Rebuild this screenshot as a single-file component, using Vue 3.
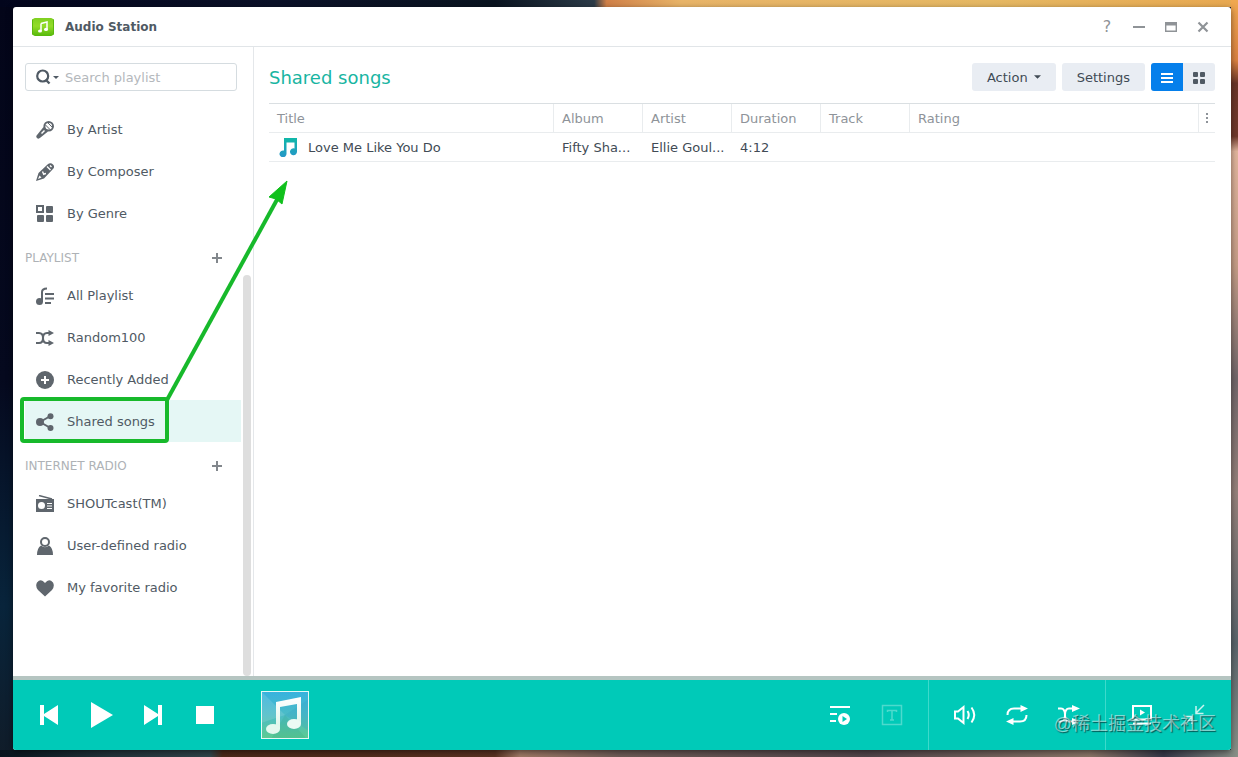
<template>
  <div class="desktop">
    <div class="window">
      <header class="titlebar">
        <svg class="app-icon" viewBox="0 0 22 20">
          <defs>
            <linearGradient id="app-green" x1="0" y1="0" x2="0" y2="1">
              <stop offset="0" stop-color="#7fd021" />
              <stop offset="0.45" stop-color="#93dc28" />
              <stop offset="1" stop-color="#55b80a" />
            </linearGradient>
          </defs>
          <rect x="0" y="2" width="22" height="16" rx="1" fill="#5cb70e" />
          <rect x="1" y="1" width="20" height="18" rx="2" fill="url(#app-green)" />
          <path d="M9 6.5L15 5V12M9 6.500V14" fill="none" stroke="#fff" stroke-width="1.5" />
          <ellipse cx="8" cy="14" rx="2" ry="1.6" fill="#fff" />
          <ellipse cx="14" cy="12.4" rx="2" ry="1.6" fill="#fff" />
        </svg>
        <h1>Audio Station</h1>
        <div class="window-buttons">
          <button aria-label="Help">?</button>
          <button aria-label="Minimize">
            <svg viewBox="0 0 12 12"><path d="M0 6H12" stroke="currentColor" stroke-width="2" /></svg>
          </button>
          <button aria-label="Maximize">
            <svg viewBox="0 0 12 12">
              <path d="M0.700 1.700H11.300V10.300H0.700Z" fill="none" stroke="currentColor" stroke-width="1.4" />
              <path d="M0 1H12V4.500H0Z" fill="currentColor" />
            </svg>
          </button>
          <button aria-label="Close">
            <svg viewBox="0 0 12 12"><path d="M1.500 1.500L10.500 10.500M10.500 1.500L1.500 10.500" stroke="currentColor" stroke-width="2.2" /></svg>
          </button>
        </div>
      </header>

      <div class="body">
        <aside class="sidebar">
          <label class="search">
            <svg viewBox="0 0 24 16">
              <circle cx="6.700" cy="7" r="5.500" fill="none" stroke="#505a64" stroke-width="2.2" />
              <path d="M10 11L13.500 14.500" stroke="#505a64" stroke-width="2.4" />
              <path d="M17 7H23L20 10Z" fill="#505a64" />
            </svg>
            <input v-model="query" type="text" placeholder="Search playlist" aria-label="Search playlist" />
          </label>

          <nav class="nav">
            <section v-for="group in groups" :key="group.id" class="group">
              <div v-if="group.title" class="group-title">
                <h2>{{ group.title }}</h2>
                <button :aria-label="'Add to ' + group.title">
                  <svg viewBox="0 0 10 10"><path d="M0 5H10M5 0V10" stroke="currentColor" stroke-width="2" /></svg>
                </button>
              </div>
              <a
                v-for="item in group.items"
                :key="item.label"
                href="#"
                class="nav-item"
                :class="{ active: item.label === selected, marked: item.label === 'Shared songs' }"
                @click.prevent="selected = item.label"
              >
                <svg class="nav-icon" viewBox="0 0 18 18" v-html="item.icon"></svg>
                <span>{{ item.label }}</span>
              </a>
            </section>
          </nav>
          <div class="scroll-thumb"></div>
        </aside>

        <main class="content">
          <div class="toolbar">
            <h2>{{ selected }}</h2>
            <button class="btn">
              Action
              <svg viewBox="0 0 6 3"><path d="M0 0H6L3 3Z" fill="currentColor" /></svg>
            </button>
            <button class="btn">Settings</button>
            <div class="view-switch">
              <button :class="{ on: view === 'list' }" aria-label="List view" @click="view = 'list'">
                <svg viewBox="0 0 12 12"><path d="M0 2H12M0 6H12M0 10H12" stroke="currentColor" stroke-width="2" /></svg>
              </button>
              <button :class="{ on: view === 'grid' }" aria-label="Grid view" @click="view = 'grid'">
                <svg viewBox="0 0 12 12" fill="currentColor">
                  <rect width="5" height="5" rx="1" />
                  <rect x="7" width="5" height="5" rx="1" />
                  <rect y="7" width="5" height="5" rx="1" />
                  <rect x="7" y="7" width="5" height="5" rx="1" />
                </svg>
              </button>
            </div>
          </div>

          <table class="songs">
            <thead>
              <tr>
                <th class="col-title">Title</th>
                <th>Album</th>
                <th>Artist</th>
                <th>Duration</th>
                <th>Track</th>
                <th class="col-rating">Rating</th>
                <th class="col-menu">
                  <button aria-label="Columns">
                    <svg viewBox="0 0 2 10" fill="currentColor">
                      <rect width="2" height="2" />
                      <rect y="4" width="2" height="2" />
                      <rect y="8" width="2" height="2" />
                    </svg>
                  </button>
                </th>
              </tr>
            </thead>
            <tbody>
              <tr v-for="song in songs" :key="song.title">
                <td>
                  <div class="song-title">
                    <svg viewBox="0 0 18 19">
                      <defs>
                        <linearGradient id="note" x1="0" y1="0" x2="0" y2="1">
                          <stop offset="0" stop-color="#10b8a8" />
                          <stop offset="1" stop-color="#2596c8" />
                        </linearGradient>
                      </defs>
                      <path d="M5 0H18V14A3.500 3.400 0 1 1 15.500 10.500V4.500H7.500V16A3.500 3.400 0 1 1 5 12.600Z" fill="url(#note)" />
                    </svg>
                    {{ song.title }}
                  </div>
                </td>
                <td>{{ song.album }}</td>
                <td>{{ song.artist }}</td>
                <td>{{ song.duration }}</td>
                <td></td>
                <td colspan="2"></td>
              </tr>
            </tbody>
          </table>
        </main>
      </div>

      <footer class="player">
        <div class="controls">
          <button aria-label="Previous">
            <svg viewBox="0 0 24 24" fill="currentColor"><path d="M3 2H7V11L21 2V22L7 13V22H3Z" /></svg>
          </button>
          <button aria-label="Play">
            <svg viewBox="0 0 24 26" class="play" fill="currentColor"><path d="M2 0L24 13L2 26Z" /></svg>
          </button>
          <button aria-label="Next">
            <svg viewBox="0 0 24 24" fill="currentColor"><path d="M3 2L17 11V2H21V22H17V13L3 22Z" /></svg>
          </button>
          <button aria-label="Stop">
            <svg viewBox="0 0 24 24" fill="currentColor"><rect x="3" y="3" width="18" height="18" /></svg>
          </button>
        </div>
        <svg class="cover" viewBox="0 0 48 48">
          <defs>
            <linearGradient id="cover-bg" x1="0" y1="0" x2="0" y2="1">
              <stop offset="0" stop-color="#36b2df" />
              <stop offset="0.5" stop-color="#4cbcc6" />
              <stop offset="1" stop-color="#5dcb90" />
            </linearGradient>
            <linearGradient id="cover-note" x1="0" y1="0" x2="0" y2="1">
              <stop offset="0" stop-color="#fff" />
              <stop offset="1" stop-color="#dcf6ea" />
            </linearGradient>
          </defs>
          <rect width="48" height="48" fill="url(#cover-bg)" />
          <path d="M0 0L24 24L0 32Z" fill="#fff" opacity="0.12" />
          <path d="M48 8L24 24L48 40Z" fill="#1f8fc0" opacity="0.15" />
          <path d="M10 48L24 24L46 48Z" fill="#2fa080" opacity="0.2" />
          <path d="M15 11L40 6V33H36V13L19 16V38H15Z" fill="url(#cover-note)" />
          <ellipse cx="12" cy="38" rx="7" ry="5" fill="#e4f8ef" />
          <ellipse cx="33" cy="33" rx="7" ry="5" fill="#ecfaf5" />
          <rect x="0.5" y="0.5" width="47" height="47" fill="none" stroke="#e4f8f6" />
        </svg>
        <div class="tools grow">
          <button aria-label="Play queue">
            <svg viewBox="0 0 24 24" fill="none" stroke="currentColor" stroke-width="2">
              <path d="M2 4H22M2 11H9M2 18H8" />
              <circle cx="16" cy="16" r="6" fill="currentColor" stroke="none" />
              <path d="M14.500 13L19 16L14.500 19Z" fill="#00cab8" stroke="none" />
            </svg>
          </button>
          <button aria-label="Lyrics" class="dim">
            <svg viewBox="0 0 24 24" fill="none" stroke="currentColor" stroke-width="1.5">
              <path d="M2.500 2.500H21.500V21.500H2.500Z" />
              <path d="M7.500 9V7.500H16.500V9M12 7.500V17M10 17H14" />
            </svg>
          </button>
        </div>
        <div class="tools">
          <button aria-label="Volume">
            <svg viewBox="0 0 24 24" fill="none" stroke="currentColor" stroke-width="2">
              <path d="M2 8.500H5L10.500 4V20L5 15.500H2Z" />
              <path d="M14.500 8Q17 12 14.500 16M18.500 4.500Q24 12 18.500 19.500" />
            </svg>
          </button>
          <button aria-label="Repeat">
            <svg viewBox="0 0 24 24" fill="none" stroke="currentColor" stroke-width="2">
              <path d="M2.500 12Q2.500 5.500 9 5.500H17M21.500 12Q21.500 18.500 15 18.500H7" />
              <path d="M15.500 2L23 5.500L15.500 9ZM8.500 15L1 18.500L8.500 22Z" fill="currentColor" stroke="none" />
            </svg>
          </button>
          <button aria-label="Shuffle">
            <svg viewBox="0 0 24 24" fill="none" stroke="currentColor" stroke-width="2">
              <path d="M1 5.500H4Q8 5.500 8 12T12 18.500H17M1 18.500H4Q8 18.500 8 12T12 5.500H17" />
              <path d="M15 2L23 5.500L15 9ZM15 15L23 18.500L15 22Z" fill="currentColor" stroke="none" />
            </svg>
          </button>
        </div>
        <div class="tools last">
          <button aria-label="Player">
            <svg viewBox="0 0 24 24" fill="none" stroke="currentColor" stroke-width="2">
              <path d="M3 3H21V16.500H3ZM3 20.500H21" />
              <path d="M10 6.500L15 9.500L10 12.500Z" fill="currentColor" stroke="none" />
            </svg>
          </button>
          <button aria-label="Mini player">
            <svg viewBox="0 0 24 24" fill="none" stroke="currentColor" stroke-width="1.5" opacity="0.8">
              <path d="M22 2L14 10M14 3V10.500H21.500M2 22L10 14M3 13.500H10V21" />
            </svg>
          </button>
        </div>
      </footer>
    </div>

    <!-- Arrow from the marked entry to the song list -->
    <svg class="arrow" width="130" height="224" viewBox="0 0 130 224">
      <path d="M4 221L116 17" stroke="#17b92b" stroke-width="4" fill="none" />
      <path d="M124 2L119 25L113 20L106 18Z" fill="#10c01c" stroke="#10c01c" />
    </svg>
    <div class="watermark">@稀土掘金技术社区</div>
  </div>
</template>

<script setup>
import { ref } from 'vue'

const query = ref('')
const selected = ref('Shared songs')
const view = ref('list')

const groups = [
  {
    id: 'browse',
    items: [
      {
        label: 'By Artist',
        icon: '<path d="M7.500 6L12 10.500L4.500 16.500Q2.500 18.500 1 17T1 14Z"/><path d="M5.500 12.500L8.500 9.500" stroke="#fff" stroke-width="1.500"/><circle cx="12.700" cy="5.300" r="4.300" fill="#fff" stroke="currentColor" stroke-width="2"/><path d="M9.500 4L14 8.500M12 2L16 6" stroke="currentColor"/>'
      },
      {
        label: 'By Composer',
        icon: '<path d="M11.500 1.500Q14.500-1 17 1.500T16.500 6.500L8 15.500L0 18L2.500 10Z"/><path d="M2 16L3.500 12.500L5.500 14.500Z" fill="#fff"/><path d="M6.500 8.500L8 12M8 11L10 10.500M11 3.500L14.500 7M14 2.500L15.500 4" stroke="#fff" stroke-width="1.400"/>'
      },
      {
        label: 'By Genre',
        icon: '<path d="M1 1H7V7H1Z" fill="none" stroke="currentColor" stroke-width="2"/><rect x="10" y="1" width="7" height="7" rx="1"/><rect x="1" y="10" width="7" height="7" rx="1"/><rect x="10" y="10" width="7" height="7" rx="1"/>'
      }
    ]
  },
  {
    id: 'playlist',
    title: 'PLAYLIST',
    items: [
      {
        label: 'All Playlist',
        icon: '<circle cx="3.500" cy="14.500" r="3.500"/><path d="M6 15V5Q6 1.500 11 1.500M9 7H18M9 11.500H18M9 16H15" fill="none" stroke="currentColor" stroke-width="2"/>'
      },
      {
        label: 'Random100',
        icon: '<path d="M0 4H3Q7 4 7 9T11 14H14M0 14H3Q7 14 7 9T11 4H14" fill="none" stroke="currentColor" stroke-width="2"/><path d="M12.500 1L18 4L12.500 7ZM12.500 11L18 14L12.500 17Z"/>'
      },
      {
        label: 'Recently Added',
        icon: '<circle cx="9" cy="9" r="9"/><path d="M5 9H13M9 5V13" stroke="#fff" stroke-width="2"/>'
      },
      {
        label: 'Shared songs',
        icon: '<circle cx="4" cy="9" r="4"/><circle cx="14.500" cy="3.300" r="3"/><circle cx="14.500" cy="15" r="3"/><path d="M14.500 3L4 9L14.500 15" fill="none" stroke="currentColor" stroke-width="2"/>'
      }
    ]
  },
  {
    id: 'radio',
    title: 'INTERNET RADIO',
    items: [
      {
        label: 'SHOUTcast(TM)',
        icon: '<path d="M0 4H18V17H0Z"/><path d="M3 0.500L16 4" stroke="currentColor" stroke-width="1.500"/><circle cx="5.500" cy="10.500" r="3.500" fill="#fff"/><path d="M11 8.500H16M11 11H16M11 13.500H16" stroke="#fff"/>'
      },
      {
        label: 'User-defined radio',
        icon: '<circle cx="9" cy="5" r="4" fill="none" stroke="currentColor" stroke-width="2"/><path d="M5 8.500Q9 12 13 8.500Q17 11 17 18H1Q1 11 5 8.500Z"/>'
      },
      {
        label: 'My favorite radio',
        icon: '<path d="M9 17.500L2 11Q-1 7.500 1 3.500Q5-1 9 4Q13-1 17 3.500Q19 7.500 16 11Z"/>'
      }
    ]
  }
]

const songs = [
  { title: 'Love Me Like You Do', album: 'Fifty Sha...', artist: 'Ellie Goul...', duration: '4:12' }
]
</script>

<style>
body {
  margin: 0;
}
</style>

<style scoped>
.desktop {
  position: relative;
  box-sizing: border-box;
  height: 100vh;
  padding: 7px 7px 7px 13px;
  background:
    linear-gradient(90deg, #07141d 0%, #22343b 9%, #30454a 17%, #4b2818 18%, #5a3222 40%, #a07a66 42%, #6e5c57 50%, #51454a 70%, #8b7668 88%, #363848 94%, #889087 100%) bottom / 100% 7px no-repeat,
    linear-gradient(180deg, #f0a850 0%, #d98040 8%, #6a3528 11%, #70382b 18%, #e0b49c 20%, #c49c86 35%, #71666a 50%, #94807a 65%, #59646b 85%, #889087 100%) right / 7px 100% no-repeat,
    linear-gradient(90deg, #02051c 0%, #0b1128 22%, #0a1420 40%, #2c3b48 48%, #d08048 49%, #e8b468 55%, #e5b863 80%, #e8a850 100%) top / 100% 7px no-repeat,
    linear-gradient(180deg, #030519 0%, #05091e 50%, #08243b 80%, #101c29 100%);
  font-family: Verdana, 'DejaVu Sans', sans-serif;
  font-size: 13px;
  color: #505a64;
}

.window {
  display: flex;
  flex-direction: column;
  height: 100%;
  border-radius: 3px;
  overflow: hidden;
  background: #fff;
  box-shadow: 0 2px 6px rgba(0, 0, 0, 0.5);
}

button {
  display: flex;
  align-items: center;
  justify-content: center;
  padding: 0;
  border: none;
  background: none;
  color: inherit;
  font: inherit;
  cursor: pointer;
}

h1,
h2 {
  margin: 0;
}

.titlebar {
  display: flex;
  align-items: center;
  height: 39px;
  flex: none;
  padding: 0 12px 0 19px;
  border-bottom: 1px solid #e1e5e8;
}

.app-icon {
  width: 22px;
  height: 20px;
  margin-right: 11px;
}

.titlebar h1 {
  flex: 1;
  font-size: 12px;
  line-height: 20px;
}

.window-buttons {
  display: flex;
  color: #8f9397;
  font-size: 16px;
}

.window-buttons button {
  width: 32px;
  height: 32px;
}

.window-buttons svg {
  width: 12px;
  height: 12px;
}

.body {
  display: flex;
  flex: 1;
  min-height: 0;
}

.sidebar {
  position: relative;
  box-sizing: border-box;
  flex: none;
  width: 241px;
  padding: 16px 12px 0;
  border-right: 1px solid #e4e7ea;
}

.search {
  display: flex;
  align-items: center;
  box-sizing: border-box;
  width: 212px;
  height: 28px;
  padding: 0 10px;
  gap: 5px;
  border: 1px solid #d5dce0;
  border-radius: 3px;
}

.search svg {
  flex: none;
  width: 24px;
  height: 16px;
}

.search input {
  flex: 1;
  min-width: 0;
  padding: 0;
  border: none;
  outline: none;
  font: inherit;
  color: inherit;
}

.search input::placeholder {
  color: #b4b8bc;
}

.nav {
  padding-top: 17px;
}

.group-title {
  display: flex;
  align-items: center;
  justify-content: space-between;
  height: 32px;
  padding: 8px 18px 0 0;
  color: #aeb2b6;
}

.group-title h2 {
  font-size: 12px;
  font-weight: normal;
}

.group-title button {
  width: 12px;
  height: 20px;
  color: #82878c;
}

.group-title svg {
  width: 10px;
  height: 10px;
}

.nav-item {
  display: flex;
  align-items: center;
  gap: 13px;
  height: 42px;
  padding-left: 11px;
  color: #505a64;
  text-decoration: none;
  white-space: nowrap;
}

.nav-icon {
  flex: none;
  width: 18px;
  height: 18px;
  margin-top: 2px;
  color: #5f666d;
  fill: currentColor;
}

.nav-item.active {
  position: relative;
  background: #e5f7f5;
}

.nav-item.marked::before {
  content: '';
  position: absolute;
  top: -3px;
  left: -5px;
  width: 141px;
  height: 38px;
  border: 4px solid #17b92b;
  border-radius: 4px;
}

.scroll-thumb {
  position: absolute;
  top: 228px;
  right: 2px;
  bottom: 0;
  width: 8px;
  border-radius: 4px;
  background: #dedede;
}

.content {
  flex: 1;
  min-width: 0;
  padding: 16px 16px 0 15px;
}

.toolbar {
  display: flex;
  align-items: center;
  gap: 6px;
  margin-bottom: 12px;
}

.toolbar h2 {
  flex: 1;
  color: #18b5a2;
  font-size: 18px;
  font-weight: normal;
}

.btn {
  height: 28px;
  padding: 0 15px;
  gap: 6px;
  border-radius: 3px;
  background: #e9edf3;
  color: #414b55;
}

.btn svg {
  width: 7px;
  height: 4px;
}

.view-switch {
  display: flex;
  border-radius: 3px;
  overflow: hidden;
  background: #e9edf3;
}

.view-switch button {
  width: 32px;
  height: 28px;
}

.view-switch .on {
  background: #057feb;
  color: #fff;
}

.view-switch svg {
  width: 12px;
  height: 12px;
  margin-top: 2px;
}

.songs {
  width: 100%;
  table-layout: fixed;
  border-collapse: separate;
  border-spacing: 0;
  border-top: 1px solid #dadfe2;
}

.songs th,
.songs td {
  box-sizing: border-box;
  height: 29px;
  padding: 0 4px 0 8px;
  border-bottom: 1px solid #e9ecee;
  text-align: left;
  white-space: nowrap;
}

.songs th {
  width: 89px;
  border-right: 1px solid #e9ecee;
  color: #8e9399;
  font-weight: normal;
}

.songs .col-title {
  width: 285px;
}

.songs .col-rating {
  width: auto;
}

.songs .col-menu {
  width: 16px;
  padding: 0;
  border-right: none;
}

.col-menu button {
  width: 16px;
  height: 20px;
}

.col-menu svg {
  width: 2px;
  height: 10px;
}

.songs td {
  color: #414b55;
}

.song-title {
  display: flex;
  align-items: center;
  gap: 11px;
  padding-left: 2px;
}

.song-title svg {
  width: 18px;
  height: 19px;
}

.player {
  display: flex;
  align-items: center;
  flex: none;
  height: 70px;
  border-top: 4px solid #b5c5c1;
  background: #00cab8;
  color: #fff;
}

.controls {
  display: flex;
  gap: 28px;
  padding-left: 24px;
}

.player button {
  width: 24px;
  height: 28px;
}

.player button svg {
  width: 24px;
  height: 24px;
}

.player button .play {
  height: 26px;
}

.cover {
  width: 48px;
  height: 48px;
  margin-left: 44px;
}

.tools {
  display: flex;
  align-items: center;
  gap: 28px;
  height: 100%;
  padding: 0 24px;
  border-right: 1px solid #3ddacb;
}

.grow {
  flex: 1;
  justify-content: flex-end;
}

.last {
  padding-right: 25px;
  border-right: none;
}

.dim {
  opacity: 0.3;
}

.arrow {
  position: absolute;
  top: 179px;
  left: 163px;
  pointer-events: none;
}

.watermark {
  position: absolute;
  right: 22px;
  bottom: 19px;
  color: rgba(255, 255, 255, 0.5);
  font-family: 'Liberation Sans', 'Noto Sans CJK SC', sans-serif;
  font-size: 18px;
  line-height: 27px;
  text-shadow: 1px 1px 1px rgba(0, 60, 60, 0.8);
  pointer-events: none;
}
</style>
